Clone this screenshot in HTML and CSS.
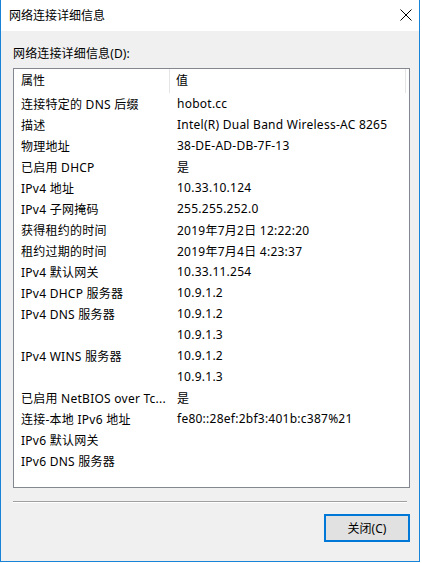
FILE: index.html
```html
<!DOCTYPE html>
<html lang="zh-CN">
<head>
<meta charset="utf-8">
<title>网络连接详细信息</title>
<link rel="stylesheet" href="styles.css">
</head>
<body>
<div class="window">
  <div class="titlebar">
    <span class="title">网络连接详细信息</span>
    <svg class="close" width="12" height="12" viewBox="0 0 12 12"><path d="M0.5 0.5 L11.5 11.5 M11.5 0.5 L0.5 11.5" stroke="#000" stroke-width="1" fill="none"/></svg>
  </div>
  <div class="content">
    <div class="label">网络连接详细信息(D):</div>
    <div class="listbox">
      <div class="header">
        <div class="hcell">属性</div>
        <div class="hcell hval">值</div>
        <div class="hend"></div>
      </div>
      <div class="rows">
        <div class="row"><span class="k">连接特定的 DNS 后缀</span><span class="v">hobot.cc</span></div>
        <div class="row"><span class="k">描述</span><span class="v">Intel(R) Dual Band Wireless-AC 8265</span></div>
        <div class="row"><span class="k">物理地址</span><span class="v">38-DE-AD-DB-7F-13</span></div>
        <div class="row"><span class="k">已启用 DHCP</span><span class="v">是</span></div>
        <div class="row"><span class="k">IPv4 地址</span><span class="v">10.33.10.124</span></div>
        <div class="row"><span class="k">IPv4 子网掩码</span><span class="v">255.255.252.0</span></div>
        <div class="row"><span class="k">获得租约的时间</span><span class="v">2019年7月2日 12:22:20</span></div>
        <div class="row"><span class="k">租约过期的时间</span><span class="v">2019年7月4日 4:23:37</span></div>
        <div class="row"><span class="k">IPv4 默认网关</span><span class="v">10.33.11.254</span></div>
        <div class="row"><span class="k">IPv4 DHCP 服务器</span><span class="v">10.9.1.2</span></div>
        <div class="row"><span class="k">IPv4 DNS 服务器</span><span class="v">10.9.1.2</span></div>
        <div class="row"><span class="k"></span><span class="v">10.9.1.3</span></div>
        <div class="row"><span class="k">IPv4 WINS 服务器</span><span class="v">10.9.1.2</span></div>
        <div class="row"><span class="k"></span><span class="v">10.9.1.3</span></div>
        <div class="row"><span class="k">已启用 NetBIOS over Tc...</span><span class="v">是</span></div>
        <div class="row"><span class="k">连接-本地 IPv6 地址</span><span class="v">fe80::28ef:2bf3:401b:c387%21</span></div>
        <div class="row"><span class="k">IPv6 默认网关</span><span class="v"></span></div>
        <div class="row"><span class="k">IPv6 DNS 服务器</span><span class="v"></span></div>
      </div>
    </div>
    <div class="sep"></div>
    <div class="buttons">
      <button class="btn">关闭(C)</button>
    </div>
  </div>
</div>
</body>
</html>
```

FILE: styles.css
```css
html, body {
  margin: 0;
  padding: 0;
  background: #ffffff;
}
body {
  font-family: "Noto Sans", "Noto Sans CJK SC", sans-serif;
  font-size: 12px;
  color: #000;
}
.window {
  width: 420px;
  height: 562px;
  box-sizing: border-box;
  border-left: 1px solid #1883d7;
  border-right: 1px solid #1883d7;
  border-bottom: 1px solid #1883d7;
  display: flex;
  flex-direction: column;
}
.titlebar {
  height: 31px;
  flex: none;
  background: #fff;
  display: flex;
  align-items: center;
  justify-content: space-between;
  padding: 0 7px 0 8px;
  box-sizing: border-box;
}
.title {
  line-height: 16px;
}
.close {
  display: block;
  margin-top: -1px;
}
.content {
  flex: 1;
  background: #f0f0f0;
  padding: 14px 9px 0 12px;
  display: flex;
  flex-direction: column;
}
.label {
  line-height: 17px;
  height: 17px;
  margin-bottom: 6px;
  letter-spacing: 0.15px;
}
.listbox {
  height: 420px;
  box-sizing: border-box;
  border: 1px solid #828790;
  background: #fff;
}
.header {
  height: 24px;
  display: flex;
}
.hcell {
  width: 156px;
  box-sizing: border-box;
  padding-left: 7px;
  line-height: 24px;
  border-right: 1px solid #e5e5e5;
}
.hval {
  width: 236px;
  padding-left: 6px;
}
.hend {
  width: 3px;
}
.row {
  height: 21px;
  display: flex;
  align-items: center;
  letter-spacing: 0.25px;
}
.k {
  width: 157px;
  flex: none;
  box-sizing: border-box;
  padding-left: 7px;
  white-space: nowrap;
  overflow: hidden;
}
.v {
  padding-left: 6px;
  white-space: nowrap;
}
.sep {
  height: 1px;
  background: #a0a0a0;
  border-bottom: 1px solid #ffffff;
  margin: 13px 3px 0 0;
}
.buttons {
  display: flex;
  justify-content: flex-end;
  margin-top: 11px;
}
.btn {
  width: 86px;
  height: 28px;
  box-sizing: border-box;
  border: 2px solid #0078d7;
  background: #e1e1e1;
  font-family: inherit;
  font-size: 12px;
  color: #000;
  padding: 0;
  margin: 0;
}
```
